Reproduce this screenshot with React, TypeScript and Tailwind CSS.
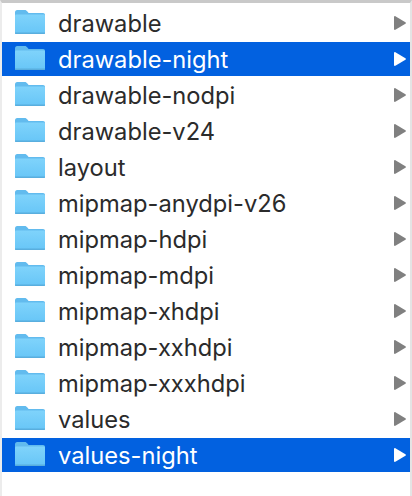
const folders = [
  { name: "drawable" },
  { name: "drawable-night", selected: true },
  { name: "drawable-nodpi" },
  { name: "drawable-v24" },
  { name: "layout" },
  { name: "mipmap-anydpi-v26" },
  { name: "mipmap-hdpi" },
  { name: "mipmap-mdpi" },
  { name: "mipmap-xhdpi" },
  { name: "mipmap-xxhdpi" },
  { name: "mipmap-xxxhdpi" },
  { name: "values" },
  { name: "values-night", selected: true },
];

const FolderIcon = () => (
  <svg width="32" height="26" viewBox="0 0 32 26" className="mb-[2px] shrink-0">
    <defs>
      <linearGradient id="folderBody" x1="0" y1="0" x2="0" y2="1">
        <stop offset="0" stopColor="#7fd3fb" />
        <stop offset="1" stopColor="#68c6f7" />
      </linearGradient>
    </defs>
    <path
      d="M1 3.500C1 2 1.800 1 3.200 1h7.600c1.200 0 1.800.5 2.600 1.600L14.600 4H29c1.300 0 2 .8 2 2v17.500c0 1-.7 1.500-1.600 1.500H2.600C1.700 25 1 24.500 1 23.500z"
      fill="#62bbee"
    />
    <path
      d="M1 7c0-.9.6-1.400 1.400-1.400h27.200c.8 0 1.400.5 1.400 1.400v16.300c0 .7-.5 1.200-1.200 1.200H2.200c-.7 0-1.200-.5-1.200-1.200z"
      fill="url(#folderBody)"
    />
    <path d="M1 23.500h30v.4c0 .7-.5 1.100-1.200 1.100H2.200C1.500 25 1 24.600 1 23.900z" fill="#59aede" />
  </svg>
);

export default function App() {
  return (
    <div className="w-[412px] h-[496px] bg-white overflow-hidden border-t-[3px] border-t-[#c9c9c9] border-l-2 border-l-[#ececec] border-r-2 border-r-[#e4e4e4] font-['Inter',sans-serif]">
      <div className="flex flex-col gap-[2px] pt-[3px]">
        {folders.map((folder) => (
          <div
            key={folder.name}
            className={`flex h-[34px] items-center pl-[12px] pr-[4px] ${
              folder.selected ? "bg-[#0261e0] text-white" : "text-[#2b2b2b]"
            }`}
          >
            <FolderIcon />
            <span className="ml-3 flex-1 pt-[1px] text-[23.7px] leading-none">{folder.name}</span>
            <svg width="12" height="14" viewBox="0 0 12 14" className="shrink-0">
              <path d="M0 1C0 .2.7-.2 1.400.2L11.400 6.200C12 6.600 12 7.400 11.400 7.800L1.400 13.800C.7 14.200 0 13.800 0 13Z" fill={folder.selected ? "#ffffff" : "#808080"} />
            </svg>
          </div>
        ))}
      </div>
    </div>
  );
}
